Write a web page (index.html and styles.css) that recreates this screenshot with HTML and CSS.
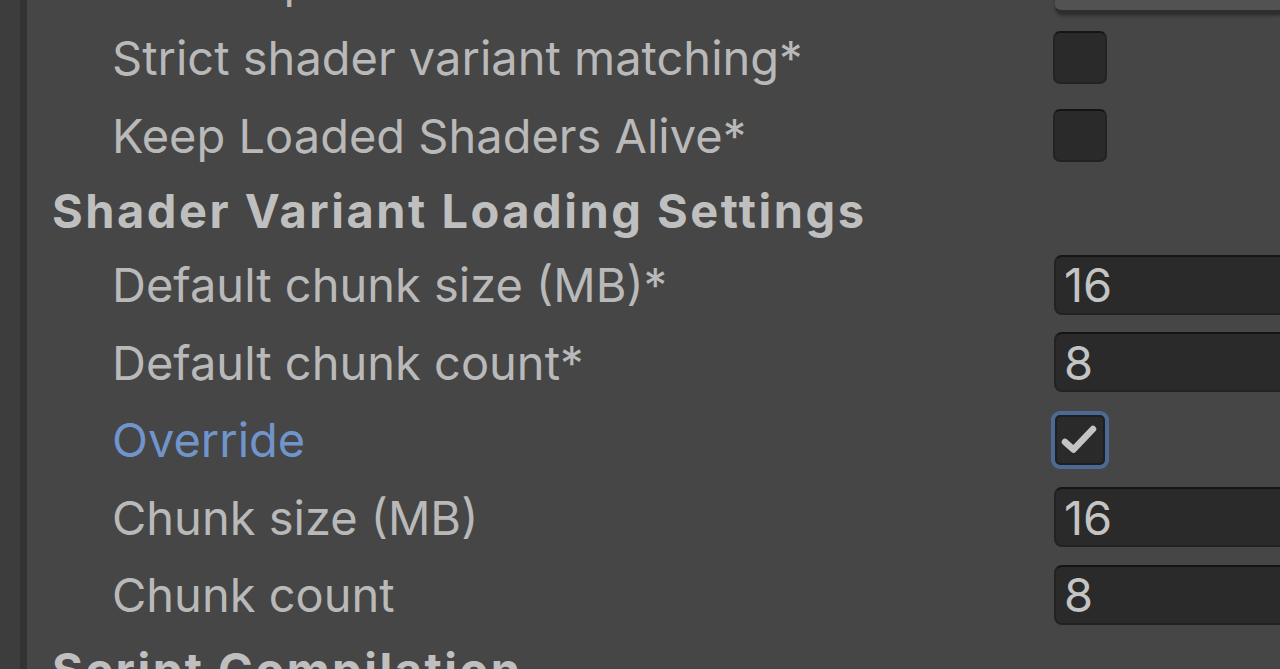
FILE: index.html
```html
<!DOCTYPE html>
<html>
<head>
<meta charset="utf-8">
<link rel="stylesheet" href="styles.css">
</head>
<body>
<div class="app">
  <div class="gutter"><div class="gutter-line"></div></div>
  <div class="panel">
    <div class="row partial">
      <div class="label">Shader precision model*</div>
      <div class="control"><div class="dropdown"></div></div>
    </div>
    <div class="row">
      <div class="label">Strict shader variant matching*</div>
      <div class="control"><div class="checkbox"></div></div>
    </div>
    <div class="row">
      <div class="label">Keep Loaded Shaders Alive*</div>
      <div class="control"><div class="checkbox"></div></div>
    </div>
    <div class="heading">Shader Variant Loading Settings</div>
    <div class="row">
      <div class="label">Default chunk size (MB)*</div>
      <div class="control"><div class="field">16</div></div>
    </div>
    <div class="row">
      <div class="label">Default chunk count*</div>
      <div class="control"><div class="field">8</div></div>
    </div>
    <div class="row">
      <div class="label override">Override</div>
      <div class="control"><div class="checkbox checked">
        <svg viewBox="0 0 50 50" width="50" height="50"><path d="M10 27 L18.5 34.5 L38 14" fill="none" stroke="#c4c4c4" stroke-width="6.5" stroke-linecap="round" stroke-linejoin="round"/></svg>
      </div></div>
    </div>
    <div class="row">
      <div class="label">Chunk size (MB)</div>
      <div class="control"><div class="field">16</div></div>
    </div>
    <div class="row">
      <div class="label">Chunk count</div>
      <div class="control"><div class="field">8</div></div>
    </div>
    <div class="heading">Script Compilation</div>
  </div>
</div>
</body>
</html>
```
FILE: styles.css
```css
html, body {
  margin: 0;
  padding: 0;
  width: 1280px;
  height: 669px;
  overflow: hidden;
  background: #464646;
}
.app {
  display: flex;
  height: 669px;
  overflow: hidden;
  font-family: Inter, "Liberation Sans", sans-serif;
  color: #b9b9b9;
}
.gutter {
  width: 27px;
  flex: none;
  background: #3d3d3d;
  display: flex;
  justify-content: flex-end;
}
.gutter-line {
  width: 7px;
  background: #333333;
}
.panel {
  flex: 1;
  display: flex;
  flex-direction: column;
  margin-top: -58.5px;
}
.row {
  height: 77.5px;
  flex: none;
  display: flex;
  align-items: center;
}
.label {
  width: 1026px;
  padding-left: 85px;
  box-sizing: border-box;
  font-size: 47px;
  flex: none;
  white-space: nowrap;
}
.label.override {
  color: #7094cc;
}
.control {
  flex: 1;
  display: flex;
  align-items: center;
}
.heading {
  height: 72px;
  flex: none;
  display: flex;
  align-items: center;
  padding-left: 25px;
  font-size: 47px;
  font-weight: 700;
  letter-spacing: 2.5px;
  color: #bfbfbf;
  white-space: nowrap;
}
.checkbox {
  width: 54px;
  height: 53px;
  box-sizing: border-box;
  background: #2a2a2a;
  border-radius: 7px;
  border: 2px solid #232323;
  border-top-color: #151515;
  display: flex;
  align-items: center;
  justify-content: center;
}
.checkbox.checked {
  width: 58px;
  height: 58px;
  border: 4px solid #4d6a95;
  box-shadow: inset 0 0 0 2px #1f1f1f;
  margin-left: -2px;
  border-radius: 9px;
}
.field {
  width: 100%;
  height: 60px;
  box-sizing: border-box;
  margin-left: 1px;
  background: #2a2a2a;
  border-radius: 8px 0 0 8px;
  border: 2px solid #222222;
  border-top-color: #151515;
  border-right: none;
  font-size: 47px;
  color: #c4c4c4;
  display: flex;
  align-items: center;
  padding-left: 8px;
}
.dropdown {
  width: 100%;
  height: 60px;
  margin-left: 2px;
  margin-top: 8px;
  box-sizing: border-box;
  background: #525252;
  border-radius: 8px 0 0 8px;
  border-bottom: 4px solid #2e2e2e;
  box-shadow: 0 2px 3px rgba(0,0,0,0.3);
}
```
